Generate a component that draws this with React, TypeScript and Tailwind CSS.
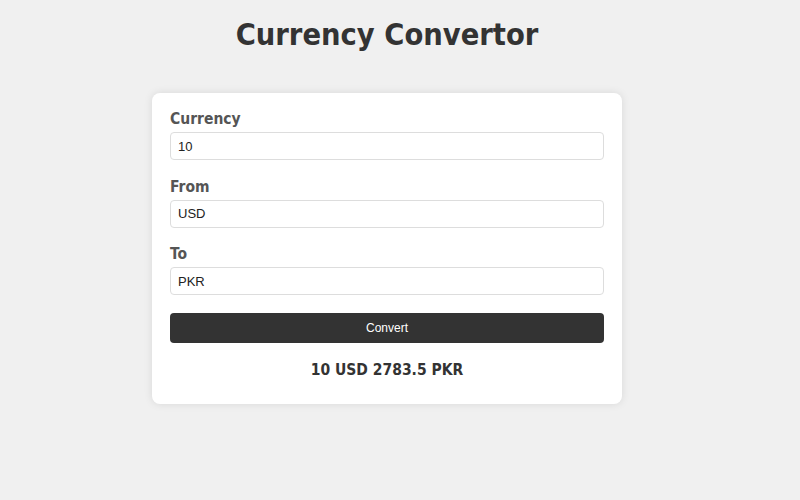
export default function App() {
  const fields = [
    { label: "Currency", value: "10" },
    { label: "From", value: "USD" },
    { label: "To", value: "PKR" },
  ];

  return (
    <div className="min-h-[500px] w-full bg-[#f0f0f0] font-['DejaVu_Sans_Condensed','DejaVu_Sans',sans-serif]">
      <div className="w-[774px] flex flex-col items-center pt-[16px]">
        <h1 className="text-[30.5px] leading-[38px] font-bold text-[#333]">Currency Convertor</h1>

        <div className="mt-[39px] w-[470px] rounded-lg bg-white shadow-[0_0_8px_rgba(0,0,0,0.1)] px-[18px] pt-[16px] pb-[24px]">
          {fields.map((f) => (
            <div key={f.label} className="mb-[16.5px] flex flex-col">
              <label className="text-[15.5px] leading-[20px] font-bold text-[#555] mb-[3px]">{f.label}</label>
              <input
                readOnly
                value={f.value}
                className="h-[28px] w-full rounded-[4px] border border-[#ddd] px-[7px] text-[13px] text-[#222] font-['Liberation_Sans',Arial,sans-serif] outline-none"
              />
            </div>
          ))}

          <button className="mt-[1px] h-[30px] w-full rounded-[4px] bg-[#333] text-[12px] text-white font-['Liberation_Sans',Arial,sans-serif]">
            Convert
          </button>

          <p className="mt-[17px] text-center text-[15.5px] leading-[20px] font-bold text-[#333]">10 USD 2783.5 PKR</p>
        </div>
      </div>
    </div>
  );
}
